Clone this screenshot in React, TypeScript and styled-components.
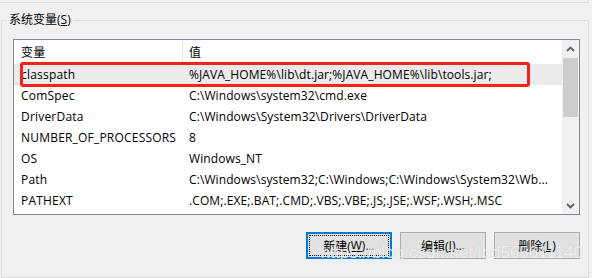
import React from 'react';
import styled, { createGlobalStyle } from 'styled-components';

const uiFont = `'Open Sans', 'Noto Sans CJK SC', sans-serif`;

const GlobalStyle = createGlobalStyle`
  html, body {
    margin: 0;
    padding: 0;
    background: #f0f0f0;
  }
  body {
    font-family: ${uiFont};
    font-size: 12px;
    color: #000;
  }
`;

type Variable = { name: string; value: string; marked?: boolean };

const variables: Variable[] = [
  { name: 'classpath', value: '%JAVA_HOME%\\lib\\dt.jar;%JAVA_HOME%\\lib\\tools.jar;', marked: true },
  { name: 'ComSpec', value: 'C:\\Windows\\system32\\cmd.exe' },
  { name: 'DriverData', value: 'C:\\Windows\\System32\\Drivers\\DriverData' },
  { name: 'NUMBER_OF_PROCESSORS', value: '8' },
  { name: 'OS', value: 'Windows_NT' },
  { name: 'Path', value: 'C:\\Windows\\system32;C:\\Windows;C:\\Windows\\System32\\Wb...' },
  { name: 'PATHEXT', value: '.COM;.EXE;.BAT;.CMD;.VBS;.VBE;.JS;.JSE;.WSF;.WSH;.MSC' }
];

const Chevron: React.FC<{ down?: boolean }> = ({ down }) => (
  <svg width="9" height="6" viewBox="0 0 9 6">
    <polyline
      points={down ? '1,1 4.5,4.5 8,1' : '1,5 4.5,1.5 8,5'}
      fill="none"
      stroke="#606060"
      strokeWidth="1.8"
    />
  </svg>
);

const App: React.FC = () => {
  return (
    <Window>
      <GlobalStyle />
      <PrevGroupEdge />
      <GroupBox>
        <Legend>
          系统变量(<u>S</u>)
        </Legend>
        <ListView>
          <Table>
            <HeaderRow>
              <NameCell>变量</NameCell>
              <HeaderDivider />
              <ValueCell>值</ValueCell>
            </HeaderRow>
            {variables.map(v => (
              <Row key={v.name} selected={v.marked}>
                {v.marked && <RedMark />}
                <NameCell>{v.name}</NameCell>
                <ValueCell>{v.value}</ValueCell>
              </Row>
            ))}
          </Table>
          <ScrollBar>
            <ScrollArrow>
              <Chevron />
            </ScrollArrow>
            <Track>
              <Thumb />
            </Track>
            <ScrollArrow>
              <Chevron down />
            </ScrollArrow>
          </ScrollBar>
        </ListView>
        <ButtonRow>
          <Button focused>
            <FocusRing>
              新建(<u>W</u>)...
            </FocusRing>
          </Button>
          <Button>
            <FocusRing>
              编辑(<u>I</u>)...
            </FocusRing>
          </Button>
          <Button>
            <FocusRing>
              删除(<u>L</u>)
            </FocusRing>
          </Button>
          <Watermark>https://blog.csdn.net/lbd565611140</Watermark>
        </ButtonRow>
      </GroupBox>
    </Window>
  );
};

const Window = styled.div`
  width: 592px;
  height: 278px;
  overflow: hidden;
  background: #f0f0f0;
`;

const PrevGroupEdge = styled.div`
  height: 2px;
  width: 588px;
  border-bottom: 1px solid #dcdcdc;
  border-right: 1px solid #dcdcdc;
  margin-bottom: 9px;
`;

const GroupBox = styled.fieldset`
  box-sizing: border-box;
  width: 588px;
  height: 266px;
  margin: 0 0 0 1px;
  padding: 0 8px 0 11px;
  border: 1px solid #dcdcdc;
  min-inline-size: 0;
`;

const Legend = styled.legend`
  margin-left: -6px;
  padding: 0 2px;
  height: 16px;
  line-height: 16px;
  font-size: 12px;
`;

const ListView = styled.div`
  display: flex;
  margin-top: 11px;
  height: 176px;
  box-sizing: border-box;
  border: 1px solid #828790;
  background: #fff;
`;

const Table = styled.div`
  flex: 1;
  display: flex;
  flex-direction: column;
  overflow: hidden;
`;

const HeaderRow = styled.div`
  display: flex;
  align-items: center;
  height: 24px;
  flex-shrink: 0;
`;

const HeaderDivider = styled.div`
  width: 1px;
  height: 23px;
  background: #e5e5e5;
  margin-left: -1px;
  align-self: flex-start;
`;

const Row = styled.div<{ selected?: boolean }>`
  position: relative;
  display: flex;
  align-items: center;
  height: 21px;
  flex-shrink: 0;
  background: ${p => (p.selected ? '#ebebeb' : 'transparent')};
`;

const NameCell = styled.span`
  box-sizing: border-box;
  width: 169px;
  padding-left: 7px;
  white-space: nowrap;
  letter-spacing: 0.2px;
`;

const ValueCell = styled.span`
  padding-left: 6px;
  white-space: nowrap;
  letter-spacing: 0.1px;
`;

const RedMark = styled.span`
  position: absolute;
  left: 6px;
  top: -2px;
  width: 510px;
  height: 25px;
  box-sizing: border-box;
  border: 3px solid #f5221c;
  border-radius: 3px;
  pointer-events: none;
`;

const ScrollBar = styled.div`
  width: 17px;
  display: flex;
  flex-direction: column;
  background: #f0f0f0;
`;

const ScrollArrow = styled.div`
  height: 17px;
  display: flex;
  align-items: center;
  justify-content: center;
`;

const Track = styled.div`
  flex: 1;
  padding: 1px 1px 0;
`;

const Thumb = styled.div`
  height: 59px;
  background: #cdcdcd;
`;

const ButtonRow = styled.div`
  position: relative;
  display: flex;
  justify-content: flex-end;
  gap: 8px;
  margin-top: 17px;
`;

const Button = styled.button<{ focused?: boolean }>`
  box-sizing: border-box;
  width: 86px;
  height: 27px;
  padding: ${p => (p.focused ? '1px' : '2px')};
  border: ${p => (p.focused ? '2px solid #0078d7' : '1px solid #adadad')};
  background: #e1e1e1;
  font-family: ${uiFont};
  font-size: 12px;
  color: #000;

  & > span {
    border-color: ${p => (p.focused ? '#000' : 'transparent')};
  }
`;

const FocusRing = styled.span`
  display: flex;
  align-items: center;
  justify-content: center;
  height: 100%;
  box-sizing: border-box;
  border: 1px dotted transparent;
`;

const Watermark = styled.span`
  position: absolute;
  right: -3px;
  top: 11px;
  font-family: 'Liberation Sans', sans-serif;
  font-size: 17px;
  color: rgba(255, 255, 255, 0.75);
  text-shadow: 0 0 1px rgba(120, 120, 120, 0.35);
  pointer-events: none;
  white-space: nowrap;
`;

export default App;
